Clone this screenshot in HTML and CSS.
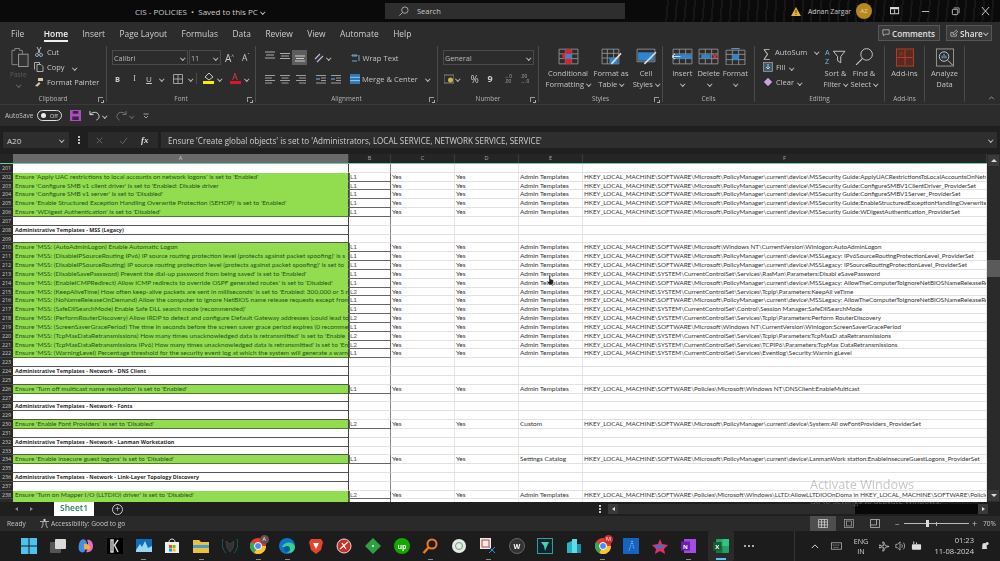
FILE: index.html
```html
<!DOCTYPE html>
<html lang="en">
<head>
<meta charset="utf-8">
<title>CIS - POLICIES</title>
<link rel="stylesheet" href="styles.css">
</head>
<body>
<div class="app">
  <header class="titlebar">
    <div class="doc-title">CIS - POLICIES &nbsp;•&nbsp; Saved to this PC <i class="chev"></i></div>
    <div class="search">
      <svg class="search-ic" viewBox="0 0 12 12"><circle cx="7.5" cy="4.5" r="3.5" fill="none" stroke="#bbb" stroke-width=".9"/><path d="M5 7 1.5 10.5" stroke="#bbb" stroke-width=".9"/></svg>
      <span>Search</span>
    </div>
    <div class="title-right">
      <svg class="warn" viewBox="0 0 12 11"><path d="M6 0 12 11H0Z" fill="#e8b33c"/><path d="M6 3.5v4M6 8.5v1.2" stroke="#3a2a00" stroke-width="1"/></svg>
      <span class="user">Adnan Zargar</span>
      <span class="avatar">AZ</span>
      <svg class="win-ic ic-ribbon" viewBox="0 0 12 10"><rect x=".5" y=".5" width="9" height="7" fill="none" stroke="#ddd"/><rect x=".5" y=".5" width="9" height="2" fill="#ddd"/><path d="M5 3v4" stroke="#ddd"/></svg>
      <svg class="win-ic" viewBox="0 0 12 10"><path d="M2 5h8" stroke="#ccc"/></svg>
      <svg class="win-ic" viewBox="0 0 12 10"><rect x="2.5" y="2.5" width="6" height="6" rx="1" fill="none" stroke="#ccc"/><path d="M4 1h6v6" fill="none" stroke="#ccc" stroke-width=".8"/></svg>
      <svg class="win-ic" viewBox="0 0 12 10"><path d="M2 0 10 9M10 0 2 9" stroke="#ddd"/></svg>
    </div>
  </header>

  <nav class="tabs">
    <span class="tab tab-file">File</span>
    <span class="tab active">Home</span>
    <span class="tab">Insert</span>
    <span class="tab">Page Layout</span>
    <span class="tab">Formulas</span>
    <span class="tab">Data</span>
    <span class="tab">Review</span>
    <span class="tab">View</span>
    <span class="tab">Automate</span>
    <span class="tab">Help</span>
    <div class="tab-actions">
      <button class="pill pill-comments"><svg class="pill-ic" viewBox="0 0 10 10"><path d="M1 1h8v5.500H4L2 8.500V6.500H1Z" fill="none" stroke="#ddd" stroke-width=".8"/></svg>Comments</button>
      <button class="pill pill-share"><svg class="pill-ic" viewBox="0 0 10 10"><path d="M1 4.500h3M1 4.500v4.500h7V6.500M4 5 8 1.500l1.500 2-4 3.500H4Z" fill="none" stroke="#ddd" stroke-width=".8"/></svg>Share <i class="chev"></i></button>
    </div>
  </nav>

  <section class="ribbon">
    <div class="group g-clip">
      <div class="body">
        <div class="paste">
          <svg class="paste-ic" viewBox="0 0 19 20"><path d="M1 2h3V0h5v2h3v4M1 2v15h6" fill="none" stroke="#8a8a8a"/><rect x="8" y="6" width="10" height="13" fill="#333" stroke="#9a9a9a"/></svg>
          <span class="paste-label">Paste</span>
          <i class="chev dim"></i>
        </div>
        <div class="clip-list">
          <div class="clip-item"><svg class="sm" viewBox="0 0 10 10"><path d="M3 0 6 6M7 0 4 6" stroke="#ddd" stroke-width=".8"/><circle cx="3" cy="8" r="1.500" fill="none" stroke="#9cc7f0" stroke-width=".8"/><circle cx="7" cy="8" r="1.500" fill="none" stroke="#9cc7f0" stroke-width=".8"/></svg>Cut</div>
          <div class="clip-item"><svg class="sm" viewBox="0 0 10 10"><path d="M.5 7.500V.5h5V2" fill="none" stroke="#ccc" stroke-width=".8"/><path d="M3 2.500h4l2 2v5H3Z" fill="none" stroke="#ccc" stroke-width=".8"/></svg>Copy <i class="chev gap"></i></div>
          <div class="clip-item"><svg class="sm" viewBox="0 0 10 10"><path d="M4 1h5v3H4ZM1 9l4-4 1.500 1.500-3 3Z" fill="#d8c9a0"/></svg>Format Painter</div>
        </div>
      </div>
      <div class="label">Clipboard</div>
      <i class="launch"></i>
    </div>

    <div class="group g-font">
      <div class="body stack">
        <div class="line">
          <div class="field f-name">Calibri<i class="chev"></i></div>
          <div class="field f-size">11<i class="chev"></i></div>
          <span class="grow-a">A<sup>^</sup></span>
          <span class="grow-b">A<sup>ˇ</sup></span>
        </div>
        <div class="line line2">
          <b class="fmt">B</b><em class="fmt">I</em><u class="fmt">U</u><i class="chev"></i>
          <svg class="sm m-l" viewBox="0 0 10 10"><path d="M.5.5h9v9h-9ZM.5 5h9M5 .5v9" fill="none" stroke="#bbb" stroke-width=".8"/></svg><i class="chev"></i>
          <span class="divider"></span>
          <span class="paint"><svg class="sm" viewBox="0 0 10 8"><path d="M5 0 9 4 5 7 1 4Z" fill="none" stroke="#ddd" stroke-width=".9"/></svg><span class="bar yellow"></span></span><i class="chev"></i>
          <span class="paint m-s"><span class="color-a">A</span><span class="bar red"></span></span><i class="chev"></i>
        </div>
      </div>
      <div class="label">Font</div>
      <i class="launch"></i>
    </div>

    <div class="group g-align">
      <div class="body stack">
        <div class="line">
          <svg class="al" viewBox="0 0 10 10"><path d="M0 1h10M1 4h8M0 7h10" stroke="#bbb" stroke-width=".9"/></svg>
          <svg class="al" viewBox="0 0 10 10"><path d="M0 2.500h10M1 5h8M0 7.500h10" stroke="#bbb" stroke-width=".9"/></svg>
          <span class="al-on"><svg class="al" viewBox="0 0 10 10"><path d="M0 4h10M1 6.500h8M0 9h10" stroke="#ddd" stroke-width=".9"/></svg></span>
          <svg class="sm m-o" viewBox="0 0 10 10"><path d="M1 6 6 1M3 9 9 3" stroke="#c4b9e0" stroke-width="1.200"/></svg><i class="chev"></i>
          <span class="rule"></span>
          <svg class="sm" viewBox="0 0 10 10"><path d="M1 2h5v1H1ZM1 8h5M8 2v6" fill="none" stroke="#7db3e8" stroke-width=".9"/></svg>
          <span class="al-text">Wrap Text</span>
        </div>
        <div class="line line2">
          <svg class="al" viewBox="0 0 10 10"><path d="M0 1.500h10M0 4h7M0 6.500h10M0 9h7" stroke="#bbb" stroke-width=".8"/></svg>
          <svg class="al" viewBox="0 0 10 10"><path d="M0 1.500h10M1.500 4h7M0 6.500h10M1.500 9h7" stroke="#bbb" stroke-width=".8"/></svg>
          <svg class="al" viewBox="0 0 10 10"><path d="M0 1.500h10M3 4h7M0 6.500h10M3 9h7" stroke="#bbb" stroke-width=".8"/></svg>
          <svg class="al m-i" viewBox="0 0 10 10"><path d="M0 1.500h10M5 4h5M5 6.500h5M0 9h10" stroke="#bbb" stroke-width=".8"/><path d="M4 5H0" stroke="#7db3e8"/></svg>
          <svg class="al" viewBox="0 0 10 10"><path d="M0 1.500h10M5 4h5M5 6.500h5M0 9h10" stroke="#bbb" stroke-width=".8"/><path d="M0 5h4" stroke="#7db3e8"/></svg>
          <span class="rule"></span>
          <svg class="sm" viewBox="0 0 10 10"><rect width="10" height="10" fill="#2f78b7"/><path d="M0 3.300h10M0 6.600h10" stroke="#cfe2f5" stroke-width=".7"/></svg>
          <span class="al-text">Merge &amp; Center</span><i class="chev gap2"></i>
        </div>
      </div>
      <div class="label">Alignment</div>
      <i class="launch"></i>
    </div>

    <div class="group g-num">
      <div class="body stack">
        <div class="line"><div class="field f-gen">General<i class="chev"></i></div></div>
        <div class="line line2 num-line">
          <svg class="sm" viewBox="0 0 10 10"><rect y="1" width="10" height="8" fill="none" stroke="#aaa" stroke-width=".7"/><circle cx="6.500" cy="6" r="2.500" fill="#d4b24a"/></svg><i class="chev"></i>
          <span class="pct">%</span><span class="comma">9</span>
          <span class="dec">←0<br>.00</span><span class="dec">.00<br>→.0</span>
        </div>
      </div>
      <div class="label">Number</div>
      <i class="launch"></i>
    </div>

    <div class="group g-styles">
      <div class="body bigs">
        <div class="big w-cf">
          <svg class="lg" viewBox="0 0 20 16"><path d="M1 1h18v14H1ZM1 5.500h18M1 10h18M7 1v14M13 1v14" fill="none" stroke="#999" stroke-width=".8"/><path d="M7 1h6v4.500H7ZM7 10h6v5H7ZM4 5.500h3V10H4Z" fill="#d8222f"/><path d="M7 5.500h6V10H7Z" fill="#3a87c8"/></svg>
          <span>Conditional<br>Formatting <i class="chev"></i></span>
        </div>
        <div class="big w-ft">
          <svg class="lg" viewBox="0 0 20 16"><path d="M1 1h16v14H1ZM1 5h16M1 9.500h16M6 1v14M12 1v14" fill="none" stroke="#999" stroke-width=".8"/><path d="M8 9h8v6H8Z" fill="#2f86d0"/><path d="M10 15 19 5" stroke="#ddd" stroke-width="1.500"/></svg>
          <span>Format as<br>Table <i class="chev"></i></span>
        </div>
        <div class="big w-cs">
          <svg class="lg" viewBox="0 0 20 16"><path d="M1 1h17v12H1Z" fill="none" stroke="#999" stroke-width=".8"/><path d="M2 4h15v8H2Z" fill="#2f86d0"/><path d="M8 15 19 4" stroke="#ddd" stroke-width="1.500"/></svg>
          <span>Cell<br>Styles <i class="chev"></i></span>
        </div>
      </div>
      <div class="label">Styles</div>
      <i class="launch"></i>
    </div>

    <div class="group g-cells">
      <div class="body bigs">
        <div class="big w-cell">
          <svg class="lg" viewBox="0 0 20 16"><path d="M1 1h18v14H1ZM1 5.500h18M1 10h18M7 1v14M13 1v14" fill="none" stroke="#999" stroke-width=".8"/><path d="M3 6h16v4H3Z" fill="#2f86d0"/><path d="M8 8H0M3 5.500 0 8l3 2.500" fill="none" stroke="#bfe0ff"/></svg>
          <span>Insert<br><i class="chev"></i></span>
        </div>
        <div class="big w-cell">
          <svg class="lg" viewBox="0 0 20 16"><path d="M1 1h18v14H1ZM1 5.500h18M1 10h18M7 1v14M13 1v14" fill="none" stroke="#999" stroke-width=".8"/><path d="M3 6h9v4H3Z" fill="#2f86d0"/><path d="m13 5 6 6M19 5l-6 6" stroke="#e0405a"/></svg>
          <span>Delete<br><i class="chev"></i></span>
        </div>
        <div class="big w-cell">
          <svg class="lg" viewBox="0 0 20 16"><path d="M1 2h18v14H1ZM1 6h18M1 11h18M7 2v14M13 2v14" fill="none" stroke="#999" stroke-width=".8"/><path d="M7 6h6v5H7Z" fill="#2f86d0"/><path d="M6 .5h8" stroke="#5aa0dc"/></svg>
          <span>Format<br><i class="chev"></i></span>
        </div>
      </div>
      <div class="label">Cells</div>
    </div>

    <div class="group g-edit">
      <div class="body edit-body">
        <div class="clip-list edit-list">
          <div class="clip-item"><span class="sigma">∑</span>AutoSum <i class="chev gap"></i></div>
          <div class="clip-item"><svg class="sm" viewBox="0 0 10 10"><rect x=".5" y=".5" width="9" height="9" fill="#3c5a72" stroke="#aaa" stroke-width=".7"/><path d="M5 2v5M3 5l2 2 2-2" fill="none" stroke="#ddd" stroke-width=".8"/></svg>Fill <i class="chev"></i></div>
          <div class="clip-item"><svg class="sm" viewBox="0 0 10 10"><path d="M5 1 9 5 5 9 1 5Z" fill="#c9a3dc" stroke="#c47ed8" stroke-width=".6"/></svg>Clear <i class="chev"></i></div>
        </div>
        <div class="big w-sort">
          <svg class="lg" viewBox="0 0 20 16"><text x="0" y="7" class="az">A</text><text x="0" y="15" class="az">Z</text><path d="M8 3h11l-4 5v6l-3-2V8Z" fill="none" stroke="#ccc" stroke-width=".9"/></svg>
          <span>Sort &amp;<br>Filter <i class="chev"></i></span>
        </div>
        <div class="big w-find">
          <svg class="lg" viewBox="0 0 20 16"><circle cx="12" cy="6" r="5.500" fill="none" stroke="#ccc" stroke-width=".9"/><path d="M8 10 2 16" stroke="#ccc"/></svg>
          <span>Find &amp;<br>Select <i class="chev"></i></span>
        </div>
      </div>
      <div class="label">Editing</div>
    </div>

    <div class="group g-addin">
      <div class="body bigs">
        <div class="big w-addin">
          <svg class="lg" viewBox="0 0 20 20"><rect x="1" y="1" width="18" height="18" fill="#5a2a20" stroke="#b5402a"/><path d="M2 10h16M10 2v16" stroke="#b5402a"/><rect x="4" y="4" width="4" height="4" fill="#7a3020"/></svg>
          <span>Add-ins</span>
        </div>
      </div>
      <div class="label">Add-ins</div>
    </div>

    <div class="group g-analyze">
      <div class="body bigs">
        <div class="big w-addin">
          <svg class="lg" viewBox="0 0 20 20"><rect x="1" y="1" width="18" height="18" fill="none" stroke="#999"/><circle cx="9" cy="9" r="5" fill="none" stroke="#ccc"/><path d="M7 11V8M9 11V6M11 11V8" stroke="#7db3e8"/><path d="m13 13 5 5" stroke="#ccc"/></svg>
          <span>Analyze<br>Data</span>
        </div>
      </div>
    </div>
    <svg class="collapse" viewBox="0 0 8 5"><path d="M1 4 4 1l3 3" fill="none" stroke="#aaa"/></svg>
  </section>

  <div class="qat">
    <span class="qat-auto">AutoSave</span>
    <span class="toggle"><i class="dot"></i>Off</span>
    <svg class="qat-ic" viewBox="0 0 12 12"><path d="M0 0h12v12H0Z" fill="#b04ac0"/><path d="M3 1h6v3H3ZM2.500 7h7v4h-7Z" fill="#3a2340"/></svg>
    <svg class="qat-ic" viewBox="0 0 12 12"><path d="M1 1v4h4M1 5c3-4 10-3 10 2 0 2-1 3-3 4" fill="none" stroke="#ddd"/></svg><i class="chev"></i>
    <svg class="qat-ic q-dim" viewBox="0 0 12 12"><path d="M11 1v4H7M11 5C8 1 1 2 1 7c0 2 1 3 3 4" fill="none" stroke="#777"/></svg><i class="chev dim"></i>
    <svg class="qat-more" viewBox="0 0 6 6"><path d="M.5 1h5M1 3l2 2 2-2" fill="none" stroke="#bbb" stroke-width=".8"/></svg>
  </div>

  <div class="formula">
    <div class="namebox">A20<i class="chev"></i></div>
    <span class="vdots"></span>
    <div class="fx-btns">
      <svg class="fx-ic" viewBox="0 0 10 10"><path d="m2 2 6 6M8 2 2 8" stroke="#666" stroke-width="1.100"/></svg>
      <svg class="fx-ic" viewBox="0 0 10 10"><path d="M1 5.500 4 8.500 9 2" fill="none" stroke="#666" stroke-width="1.100"/></svg>
      <span class="fx">fx</span>
    </div>
    <div class="fbar">Ensure 'Create global objects' is set to 'Administrators, LOCAL SERVICE, NETWORK SERVICE, SERVICE'<i class="chev"></i></div>
  </div>

  <main class="sheet">
    <div class="grid">
      <div class="row head">
        <div class="corner"></div><div class="ch sel">A</div><div class="ch">B</div><div class="ch">C</div><div class="ch">D</div><div class="ch">E</div><div class="ch">F</div>
      </div>
      <div class="rows">
        <div class="row"><div class="rh">201</div><div class="cell a"></div><div class="cell b"></div><div class="cell"></div><div class="cell"></div><div class="cell"></div><div class="cell"></div></div>

        <div class="row"><div class="rh">202</div><div class="cell a green">Ensure 'Apply UAC restrictions to local accounts on network logons' is set to 'Enabled'</div><div class="cell b box">L1</div><div class="cell">Yes</div><div class="cell">Yes</div><div class="cell">Admin Templates</div><div class="cell">HKEY_LOCAL_MACHINE\SOFTWARE\Microsoft\PolicyManager\current\device\MSSecurity Guide:ApplyUACRestrictionsToLocalAccountsOnNetw</div></div>
        <div class="row"><div class="rh">203</div><div class="cell a green">Ensure 'Configure SMB v1 client driver' is set to 'Enabled: Disable driver</div><div class="cell b box">L1</div><div class="cell">Yes</div><div class="cell">Yes</div><div class="cell">Admin Templates</div><div class="cell">HKEY_LOCAL_MACHINE\SOFTWARE\Microsoft\PolicyManager\current\device\MSSecurity Guide:ConfigureSMBV1ClientDriver_ProviderSet</div></div>
        <div class="row"><div class="rh">204</div><div class="cell a green">Ensure 'Configure SMB v1 server' is set to 'Disabled'</div><div class="cell b box">L1</div><div class="cell">Yes</div><div class="cell">Yes</div><div class="cell">Admin Templates</div><div class="cell">HKEY_LOCAL_MACHINE\SOFTWARE\Microsoft\PolicyManager\current\device\MSSecurity Guide:ConfigureSMBV1Server_ProviderSet</div></div>
        <div class="row"><div class="rh">205</div><div class="cell a green">Ensure 'Enable Structured Exception Handling Overwrite Protection (SEHOP)' is set to 'Enabled'</div><div class="cell b box">L1</div><div class="cell">Yes</div><div class="cell">Yes</div><div class="cell">Admin Templates</div><div class="cell">HKEY_LOCAL_MACHINE\SOFTWARE\Microsoft\PolicyManager\current\device\MSSecurity Guide:EnableStructuredExceptionHandlingOverwrite</div></div>
        <div class="row"><div class="rh">206</div><div class="cell a green end">Ensure 'WDigest Authentication' is set to 'Disabled'</div><div class="cell b box">L1</div><div class="cell">Yes</div><div class="cell">Yes</div><div class="cell">Admin Templates</div><div class="cell">HKEY_LOCAL_MACHINE\SOFTWARE\Microsoft\PolicyManager\current\device\MSSecurity Guide:WDigestAuthentication_ProviderSet</div></div>

        <div class="row"><div class="rh">207</div><div class="cell a plain"></div><div class="cell b"></div><div class="cell"></div><div class="cell"></div><div class="cell"></div><div class="cell"></div></div>
        <div class="row"><div class="rh">208</div><div class="cell a plain title">Administrative Templates - MSS (Legacy)</div><div class="cell b"></div><div class="cell"></div><div class="cell"></div><div class="cell"></div><div class="cell"></div></div>
        <div class="row"><div class="rh">209</div><div class="cell a plain"></div><div class="cell b"></div><div class="cell"></div><div class="cell"></div><div class="cell"></div><div class="cell"></div></div>

        <div class="row"><div class="rh">210</div><div class="cell a green">Ensure 'MSS: (AutoAdminLogon) Enable Automatic Logon</div><div class="cell b box">L1</div><div class="cell">Yes</div><div class="cell">Yes</div><div class="cell">Admin Templates</div><div class="cell">HKEY_LOCAL_MACHINE\SOFTWARE\Microsoft\Windows NT\CurrentVersion\Winlogon:AutoAdminLogon</div></div>
        <div class="row"><div class="rh">211</div><div class="cell a green">Ensure 'MSS: (DisableIPSourceRouting IPv6) IP source routing protection level (protects against packet spoofing)' is s</div><div class="cell b box">L1</div><div class="cell">Yes</div><div class="cell">Yes</div><div class="cell">Admin Templates</div><div class="cell">HKEY_LOCAL_MACHINE\SOFTWARE\Microsoft\PolicyManager\current\device\MSSLegacy: IPv6SourceRoutingProtectionLevel_ProviderSet</div></div>
        <div class="row"><div class="rh">212</div><div class="cell a green">Ensure 'MSS: (DisableIPSourceRouting) IP source routing protection level (protects against packet spoofing)' is set to</div><div class="cell b box">L1</div><div class="cell">Yes</div><div class="cell">Yes</div><div class="cell">Admin Templates</div><div class="cell">HKEY_LOCAL_MACHINE\SOFTWARE\Microsoft\PolicyManager\current\device\MSSLegacy: IPSourceRoutingProtectionLevel_ProviderSet</div></div>
        <div class="row"><div class="rh">213</div><div class="cell a green">Ensure 'MSS: (DisableSavePassword) Prevent the dial-up password from being saved' is set to 'Enabled'</div><div class="cell b box">L1</div><div class="cell">Yes</div><div class="cell">Yes</div><div class="cell">Admin Templates</div><div class="cell">HKEY_LOCAL_MACHINE\SYSTEM\CurrentControlSet\Services\RasMan\Parameters:Disabl eSavePassword</div></div>
        <div class="row"><div class="rh">214</div><div class="cell a green">Ensure 'MSS: (EnableICMPRedirect) Allow ICMP redirects to override OSPF generated routes' is set to 'Disabled'</div><div class="cell b box">L1</div><div class="cell">Yes</div><div class="cell">Yes</div><div class="cell">Admin Templates</div><div class="cell">HKEY_LOCAL_MACHINE\SOFTWARE\Microsoft\PolicyManager\current\device\MSSLegacy: AllowTheComputerToIgnoreNetBIOSNameReleaseRe</div></div>
        <div class="row"><div class="rh">215</div><div class="cell a green">Ensure 'MSS: (KeepAliveTime) How often keep-alive packets are sent in milliseconds' is set to 'Enabled: 300,000 or 5 m</div><div class="cell b box">L2</div><div class="cell">Yes</div><div class="cell">Yes</div><div class="cell">Admin Templates</div><div class="cell">HKEY_LOCAL_MACHINE\SYSTEM\CurrentControlSet\Services\Tcpip\Parameters:KeepAli veTime</div></div>
        <div class="row"><div class="rh">216</div><div class="cell a green">Ensure 'MSS: (NoNameReleaseOnDemand) Allow the computer to ignore NetBIOS name release requests except from W</div><div class="cell b box">L1</div><div class="cell">Yes</div><div class="cell">Yes</div><div class="cell">Admin Templates</div><div class="cell">HKEY_LOCAL_MACHINE\SOFTWARE\Microsoft\PolicyManager\current\device\MSSLegacy: AllowTheComputerToIgnoreNetBIOSNameReleaseRe</div></div>
        <div class="row"><div class="rh">217</div><div class="cell a green">Ensure 'MSS: (SafeDllSearchMode) Enable Safe DLL search mode (recommended)'</div><div class="cell b box">L1</div><div class="cell">Yes</div><div class="cell">Yes</div><div class="cell">Admin Templates</div><div class="cell">HKEY_LOCAL_MACHINE\SYSTEM\CurrentControlSet\Control\Session Manager:SafeDllSearchMode</div></div>
        <div class="row"><div class="rh">218</div><div class="cell a green">Ensure 'MSS: (PerformRouterDiscovery) Allow IRDP to detect and configure Default Gateway addresses (could lead to</div><div class="cell b box">L2</div><div class="cell">Yes</div><div class="cell">Yes</div><div class="cell">Admin Templates</div><div class="cell">HKEY_LOCAL_MACHINE\SYSTEM\CurrentControlSet\Services\Tcpip\Parameters:Perform RouterDiscovery</div></div>
        <div class="row"><div class="rh">219</div><div class="cell a green">Ensure 'MSS: (ScreenSaverGracePeriod) The time in seconds before the screen saver grace period expires (0 recommen</div><div class="cell b box">L1</div><div class="cell">Yes</div><div class="cell">Yes</div><div class="cell">Admin Templates</div><div class="cell">HKEY_LOCAL_MACHINE\SOFTWARE\Microsoft\Windows NT\CurrentVersion\Winlogon:ScreenSaverGracePeriod</div></div>
        <div class="row"><div class="rh">220</div><div class="cell a green">Ensure 'MSS: (TcpMaxDataRetransmissions) How many times unacknowledged data is retransmitted' is set to 'Enable</div><div class="cell b box">L2</div><div class="cell">Yes</div><div class="cell">Yes</div><div class="cell">Admin Templates</div><div class="cell">HKEY_LOCAL_MACHINE\SYSTEM\CurrentControlSet\Services\Tcpip\Parameters:TcpMaxD ataRetransmissions</div></div>
        <div class="row"><div class="rh">221</div><div class="cell a green">Ensure 'MSS: (TcpMaxDataRetransmissions IPv6) How many times unacknowledged data is retransmitted' is set to 'En</div><div class="cell b box">L2</div><div class="cell">Yes</div><div class="cell">Yes</div><div class="cell">Admin Templates</div><div class="cell">HKEY_LOCAL_MACHINE\SYSTEM\CurrentControlSet\Services\TCPIP6\Parameters:TcpMax DataRetransmissions</div></div>
        <div class="row"><div class="rh">222</div><div class="cell a green end">Ensure 'MSS: (WarningLevel) Percentage threshold for the security event log at which the system will generate a warni</div><div class="cell b box">L1</div><div class="cell">Yes</div><div class="cell">Yes</div><div class="cell">Admin Templates</div><div class="cell">HKEY_LOCAL_MACHINE\SYSTEM\CurrentControlSet\Services\Eventlog\Security:Warnin gLevel</div></div>

        <div class="row"><div class="rh">223</div><div class="cell a plain"></div><div class="cell b"></div><div class="cell"></div><div class="cell"></div><div class="cell"></div><div class="cell"></div></div>
        <div class="row"><div class="rh">224</div><div class="cell a title">Administrative Templates - Network - DNS Client</div><div class="cell b"></div><div class="cell"></div><div class="cell"></div><div class="cell"></div><div class="cell"></div></div>
        <div class="row"><div class="rh">225</div><div class="cell a plain"></div><div class="cell b"></div><div class="cell"></div><div class="cell"></div><div class="cell"></div><div class="cell"></div></div>
        <div class="row"><div class="rh">226</div><div class="cell a green end">Ensure 'Turn off multicast name resolution' is set to 'Enabled'</div><div class="cell b box">L1</div><div class="cell">Yes</div><div class="cell">Yes</div><div class="cell">Admin Templates</div><div class="cell">HKEY_LOCAL_MACHINE\SOFTWARE\Policies\Microsoft\Windows NT\DNSClient:EnableMulticast</div></div>
        <div class="row"><div class="rh">227</div><div class="cell a plain"></div><div class="cell b"></div><div class="cell"></div><div class="cell"></div><div class="cell"></div><div class="cell"></div></div>
        <div class="row"><div class="rh">228</div><div class="cell a title">Administrative Templates - Network - Fonts</div><div class="cell b"></div><div class="cell"></div><div class="cell"></div><div class="cell"></div><div class="cell"></div></div>
        <div class="row"><div class="rh">229</div><div class="cell a plain"></div><div class="cell b"></div><div class="cell"></div><div class="cell"></div><div class="cell"></div><div class="cell"></div></div>
        <div class="row"><div class="rh">230</div><div class="cell a green end">Ensure 'Enable Font Providers' is set to 'Disabled'</div><div class="cell b box">L2</div><div class="cell">Yes</div><div class="cell">Yes</div><div class="cell">Custom</div><div class="cell">HKEY_LOCAL_MACHINE\SOFTWARE\Microsoft\PolicyManager\current\device\System:All owFontProviders_ProviderSet</div></div>
        <div class="row"><div class="rh">231</div><div class="cell a plain"></div><div class="cell b"></div><div class="cell"></div><div class="cell"></div><div class="cell"></div><div class="cell"></div></div>
        <div class="row"><div class="rh">232</div><div class="cell a title">Administrative Templates - Network - Lanman Workstation</div><div class="cell b"></div><div class="cell"></div><div class="cell"></div><div class="cell"></div><div class="cell"></div></div>
        <div class="row"><div class="rh">233</div><div class="cell a plain"></div><div class="cell b"></div><div class="cell"></div><div class="cell"></div><div class="cell"></div><div class="cell"></div></div>
        <div class="row"><div class="rh">234</div><div class="cell a green end">Ensure 'Enable insecure guest logons' is set to 'Disabled'</div><div class="cell b box">L1</div><div class="cell">Yes</div><div class="cell">Yes</div><div class="cell">Settings Catalog</div><div class="cell">HKEY_LOCAL_MACHINE\SOFTWARE\Microsoft\PolicyManager\current\device\LanmanWork station:EnableInsecureGuestLogons_ProviderSet</div></div>
        <div class="row"><div class="rh">235</div><div class="cell a plain"></div><div class="cell b"></div><div class="cell"></div><div class="cell"></div><div class="cell"></div><div class="cell"></div></div>
        <div class="row"><div class="rh">236</div><div class="cell a title">Administrative Templates - Network - Link-Layer Topology Discovery</div><div class="cell b"></div><div class="cell"></div><div class="cell"></div><div class="cell"></div><div class="cell"></div></div>
        <div class="row"><div class="rh">237</div><div class="cell a"></div><div class="cell b"></div><div class="cell"></div><div class="cell"></div><div class="cell"></div><div class="cell"></div></div>
        <div class="row"><div class="rh">238</div><div class="cell a green">Ensure 'Turn on Mapper I/O (LLTDIO) driver' is set to 'Disabled'</div><div class="cell b box">L2</div><div class="cell">Yes</div><div class="cell">Yes</div><div class="cell">Admin Templates</div><div class="cell">HKEY_LOCAL_MACHINE\SOFTWARE\Policies\Microsoft\Windows\LLTD:AllowLLTDIOOnDoma in HKEY_LOCAL_MACHINE\SOFTWARE\Policies\Mi</div></div>
        <div class="row"><div class="rh"></div><div class="cell a green"></div><div class="cell b box"></div><div class="cell"></div><div class="cell"></div><div class="cell"></div><div class="cell"></div></div>
      </div>
    </div>
    <div class="vscroll">
      <span class="vbtn"><i class="tri up"></i></span>
      <span class="vtrack"><span class="vthumb"></span></span>
      <span class="vbtn vbtn-low"><i class="tri down"></i></span>
    </div>
    <svg class="cursor" viewBox="0 0 8 10"><path d="M3 0h1.500v4l3 1v3L6 10H3L.5 6 3 6.500Z" fill="#222" stroke="#fff" stroke-width=".5"/></svg>
    <div class="activate"><div class="act-1">Activate Windows</div><div class="act-2">Go to Settings to activate Windows.</div></div>
  </main>

  <div class="sheetbar">
    <i class="nav-tri left"></i><i class="nav-tri right"></i>
    <span class="sheet-tab">Sheet1</span>
    <span class="add-sheet">+</span>
    <span class="hdots"></span>
    <span class="hbtn hbtn-first"><i class="nav-tri left lit"></i></span>
    <span class="hthumb"></span>
    <span class="htrack"></span>
    <span class="hbtn"><i class="nav-tri right lit"></i></span>
  </div>

  <footer class="status">
    <span class="ready">Ready</span>
    <svg class="acc" viewBox="0 0 11 11"><circle cx="5.500" cy="2" r="1.200" fill="#ccc"/><path d="M1 3.500h9M4 4v3L2.500 10M7 4v3l1.500 3" fill="none" stroke="#ccc" stroke-width=".8"/></svg>
    <span class="acc-text">Accessibility: Good to go</span>
    <span class="view view-on"><svg class="view-ic" viewBox="0 0 10 9"><path d="M.5.5h9v8h-9ZM.5 3h9M.5 5.800h9M3.500.5v8M6.500.5v8" fill="none" stroke="#ddd" stroke-width=".7"/></svg></span>
    <span class="view"><svg class="view-ic" viewBox="0 0 10 9"><rect x=".5" y=".5" width="9" height="8" fill="none" stroke="#aaa" stroke-width=".7"/><rect x="2.500" y="2" width="5" height="5" fill="none" stroke="#aaa" stroke-width=".7"/></svg></span>
    <span class="view"><svg class="view-ic" viewBox="0 0 10 9"><path d="M.5.5h9v8h-9ZM.5 6h6M6.500.5V6" fill="none" stroke="#bbb" stroke-width=".8"/></svg></span>
    <span class="zoom-minus">−</span>
    <span class="slider"><i class="knob"></i><i class="tick"></i></span>
    <span class="zoom-plus">+</span>
    <span class="zoom-val">70%</span>
  </footer>

  <div class="taskbar">
    <div class="apps">
      <span class="app-ic"><svg viewBox="0 0 16 16"><path d="M0 0h7.500v7.500H0ZM8.500 0H16v7.500H8.500ZM0 8.500h7.500V16H0ZM8.500 8.500H16V16H8.500Z" fill="#4cc2f1"/></svg></span>
      <span class="app-ic"><svg viewBox="0 0 16 16"><rect y="4" width="11" height="11" rx="1" fill="#555"/><rect x="5" y="1" width="11" height="10" rx="1" fill="#d9d9d9"/></svg></span>
      <span class="app-ic"><svg viewBox="0 0 16 16"><path d="M3 2c3-2 5 0 6 3L7 13c-1 2-5 2-6-1S1 4 3 2Z" fill="#3f8fe8"/><path d="M9 2c3-1 6 2 6 6s-3 7-7 6c2-2 3-9 1-12Z" fill="#e86fc0"/><path d="M6 6c2-1 5 0 6 3s-3 3-6 2Z" fill="#f0b040"/></svg></span>
      <span class="app-ic"><svg viewBox="0 0 16 16"><rect width="16" height="16" fill="#000"/><path d="M4 2h2v12H4ZM11 2 7.500 7 11 14" fill="none" stroke="#ddd" stroke-width="1.400"/></svg></span>
      <span class="app-ic dash"><svg viewBox="0 0 16 16"><rect y="1" width="16" height="13" fill="#0f6cb5"/><path d="M0 12 4 6l2 3 3-6 3 7 4-2v6H0Z" fill="#9ad7f7"/></svg></span>
      <span class="app-ic"><svg viewBox="0 0 16 16"><path d="M1 4h14v11H1Z" fill="#eee"/><path d="M5 4c0-4 6-4 6 0" fill="none" stroke="#ddd"/><path d="M5 7h3v3H5Z" fill="#f25022"/><path d="M8.500 7h3v3h-3Z" fill="#7fba00"/><path d="M5 10.500h3v3H5Z" fill="#00a4ef"/><path d="M8.500 10.500h3v3h-3Z" fill="#ffb900"/></svg></span>
      <span class="app-ic dash"><svg viewBox="0 0 16 16"><path d="M0 2h6l2 2h8v11H0Z" fill="#f2c037"/><path d="M0 7h16v3H0Z" fill="#3aa0dc"/></svg></span>
      <span class="app-ic"><svg viewBox="0 0 16 16"><path d="M1 1c-2 6 0 11 3 14M15 1c2 6 0 11-3 14" fill="none" stroke="#17606b"/><path d="M4 3l4 3 4-3-1 7-3 4-3-4Z" fill="#333" stroke="#555" stroke-width=".5"/></svg></span>
      <span class="app-ic dash badge-wrap"><svg viewBox="0 0 16 16"><circle cx="8" cy="8" r="8" fill="#e33b2e"/><path d="M8 8 16 8A8 8 0 0 1 4 15Z" fill="#f7c52c"/><path d="M8 8 4 15A8 8 0 0 1 1 4Z" fill="#3aa757"/><circle cx="8" cy="8" r="3.500" fill="#4c8bf5" stroke="#fff"/></svg><i class="badge gray">A</i></span>
      <span class="app-ic dash"><svg viewBox="0 0 16 16"><circle cx="8" cy="8" r="8" fill="#0f74c8"/><path d="M16 9c0 5-6 8-9 4s3-7 5-4H3c2-6 12-6 13 0Z" fill="#3ecf8e"/><circle cx="8" cy="11" r="3" fill="#0a5aa0"/></svg></span>
      <span class="app-ic"><svg viewBox="0 0 16 16"><path d="M3 1h10l2 3-2 8-5 4-5-4-2-8Z" fill="#e2452a"/><path d="M5 5h6L8 11Z" fill="#fff"/></svg></span>
      <span class="app-ic"><svg viewBox="0 0 16 16"><circle cx="8" cy="8" r="7" fill="#c9302c" stroke="#ddd"/><path d="M4 11 12 4M6 5l4 6" stroke="#fff" stroke-width="1.200"/></svg></span>
      <span class="app-ic"><svg viewBox="0 0 16 16"><path d="M8 0 16 8 8 16 0 8Z" fill="#2ea043"/><circle cx="8" cy="8" r="1" fill="#cfe"/></svg></span>
      <span class="app-ic"><svg viewBox="0 0 16 16"><circle cx="8" cy="8" r="8" fill="#14a800"/><text x="8" y="10.500" class="up">up</text></svg></span>
      <span class="app-ic dash"><svg viewBox="0 0 16 16"><circle cx="10" cy="6" r="4.500" fill="none" stroke="#f07c1c" stroke-width="2"/><path d="M7 9 1.500 15" stroke="#f07c1c" stroke-width="2.500"/></svg></span>
      <span class="app-ic"><svg viewBox="0 0 16 16"><circle cx="8" cy="8" r="7" fill="#e8e8e8"/><circle cx="8" cy="8" r="3.500" fill="none" stroke="#58a86c"/></svg></span>
      <span class="app-ic dash"><svg viewBox="0 0 16 16"><rect width="11" height="11" fill="#eee"/><rect x="2" y="2" width="7" height="7" fill="none" stroke="#d03a3a"/><path d="m9 9 6 6M15 9l-6 6" stroke="#2c9ad6"/></svg></span>
      <span class="app-ic"><svg viewBox="0 0 16 16"><circle cx="8" cy="8" r="7.500" fill="#333" stroke="#666"/><text x="8" y="11" class="w">W</text></svg></span>
      <span class="app-ic"><svg viewBox="0 0 16 16"><rect x=".5" y=".5" width="15" height="15" fill="#123" stroke="#2ca58d"/><path d="M4 4h8l-2 4-2 5-1-5Z" fill="#3dd6a8"/></svg></span>
      <span class="app-ic"><svg viewBox="0 0 16 16"><path d="M1 5l5-2v12H1Z" fill="#28b3c7"/><path d="M6 1h5v14H6Z" fill="#5fdce6"/><path d="M11 6h4v9h-4Z" fill="#1b90a8"/></svg></span>
      <span class="app-ic dash badge-wrap"><svg viewBox="0 0 16 16"><circle cx="8" cy="8" r="8" fill="#e33b2e"/><path d="M8 8 16 8A8 8 0 0 1 4 15Z" fill="#f7c52c"/><path d="M8 8 4 15A8 8 0 0 1 1 4Z" fill="#3aa757"/><circle cx="8" cy="8" r="3.500" fill="#4c8bf5" stroke="#fff"/></svg><i class="badge red">M</i></span>
      <span class="app-ic"><svg viewBox="0 0 16 16"><rect width="16" height="16" fill="#1565c0"/><path d="M9 3 6 13M9 3l2 8" stroke="#9ccaf5" stroke-dasharray="1 1"/></svg></span>
      <span class="app-ic"><svg viewBox="0 0 16 16"><path d="M8 1l2 5 6 1-4 4 1 5-5-3-5 3 1-5-4-4 6-1Z" fill="#e0325c"/><path d="M3 7h10l-3 3-5 1Z" fill="#3f6fd8"/></svg></span>
      <span class="app-ic dash"><svg viewBox="0 0 16 16"><rect x="3" y="1" width="12" height="14" fill="#a44ee0"/><rect y="3.500" width="9" height="9" fill="#6a1fb0"/><text x="4.500" y="10.700" class="o">N</text></svg></span>
      <span class="app-ic excel"><svg viewBox="0 0 16 16"><rect x="3" y="1" width="13" height="14" rx="1" fill="#21a366"/><path d="M9.500 1H16v7H9.500Z" fill="#33c481"/><path d="M3 8h6.500v7H3Z" fill="#107c41"/><rect y="4" width="8.500" height="8.500" fill="#185c37"/><text x="4.200" y="10.700" class="o">X</text></svg></span>
      <span class="app-ic more"><i></i><i></i><i></i></span>
    </div>
    <div class="tray">
      <svg class="tray-ic chevron-up" viewBox="0 0 10 6"><path d="M1 5 5 1l4 4" fill="none" stroke="#ddd" stroke-width="1.200"/></svg>
      <svg class="tray-ic kb" viewBox="0 0 12 8"><rect x=".5" y=".5" width="11" height="7" fill="none" stroke="#bbb" stroke-width=".8"/><path d="M2 3h8M3 5.500h6" stroke="#bbb" stroke-dasharray="1 1"/></svg>
      <div class="lang">ENG<br>IN</div>
      <svg class="tray-ic t-net" viewBox="0 0 12 12"><path d="M11 6 7 5 5 1H4l1 4-3 .5L1 4 0 6l1 2 1-1.500L5 7l-1 4h1l2-4Z" fill="none" stroke="#ddd" stroke-width=".8"/></svg>
      <svg class="tray-ic t-vol" viewBox="0 0 12 12"><path d="M1 4h2l3-3v10L3 8H1Z" fill="none" stroke="#ddd" stroke-width=".8"/><path d="M8 4c1 1 1 3 0 4M10 2c2 2 2 6 0 8" fill="none" stroke="#ddd" stroke-width=".8"/></svg>
      <svg class="tray-ic t-bat" viewBox="0 0 12 10"><rect x="1" y="3" width="10" height="6" rx="1" fill="#ddd"/><path d="M3 3V0M6 3V1" stroke="#ddd"/></svg>
      <div class="clock">01:23<br>11-08-2024</div>
      <svg class="tray-ic t-bell" viewBox="0 0 12 12"><path d="M3 9V5a3 3 0 0 1 6 0v4l1 1H2Z" fill="#ddd"/><circle cx="9.500" cy="2.500" r="2" fill="#ddd"/></svg>
    </div>
  </div>
</div>
</body>
</html>
```

FILE: styles.css
```css
* { box-sizing: border-box; }
html, body { margin: 0; padding: 0; height: 100%; background: #1c1c1c; overflow: hidden; }
.app {
  width: 1000px; height: 561px; display: flex; flex-direction: column;
  font-family: "Open Sans", "Noto Sans", sans-serif; color: #d8d8d8; filter: blur(.35px);
}
svg { display: block; flex: none; }
i { font-style: normal; }
.chev {
  display: inline-block; width: 3.500px; height: 3.500px; flex: none;
  border-right: 1px solid #bbb; border-bottom: 1px solid #bbb;
  transform: rotate(45deg); vertical-align: 1.500px; margin-left: 1px;
}
.chev.dim { border-color: #666; }
.chev.gap { margin-left: 6px; }
.chev.gap2 { margin-left: 8px; }

/* title bar */
.titlebar {
  height: 22px; background-color: #0a0a0a; display: flex; align-items: center; padding-left: 135px; flex: none;
  background-image: repeating-linear-gradient(95deg, transparent 0 7px, #161616 7px 9px);
  background-size: 340px 22px; background-position: right top; background-repeat: no-repeat;
}
.doc-title { width: 250px; font-size: 8px; color: #ccc; }
.search { width: 240px; height: 16px; background: #2e2e2e; display: flex; align-items: center; padding-left: 13px; font-size: 7.500px; color: #c8c8c8; }
.search-ic { width: 11px; height: 11px; margin-right: 8px; }
.title-right { margin-left: auto; display: flex; align-items: center; }
.warn { width: 10px; height: 9px; margin-right: 7px; }
.user { font-size: 6.800px; color: #ccc; width: 48px; }
.avatar { width: 16px; height: 16px; border-radius: 50%; background: #b5891f; color: #e8d9a8; font-size: 6px; display: flex; align-items: center; justify-content: center; margin-right: 18px; }
.win-ic { width: 11px; height: 9px; margin-right: 19px; }
.win-ic:last-child { margin-right: 9px; }

/* tabs */
.tabs { height: 22px; background: #2c2c2c; display: flex; align-items: center; padding-left: 11px; gap: 14.500px; font-size: 8.400px; flex: none; }
.tab { color: #cfcfcf; position: relative; }
.tab-file { margin-right: 5px; }
.tab.active { color: #f4f4f4; font-weight: 600; }
.tab.active::after { content: ""; position: absolute; left: 0; right: 0; bottom: -3px; height: 2px; background: #eee; }
.tab-actions { margin-left: auto; display: flex; gap: 6px; padding-right: 8px; }
.pill { height: 16px; background: #3a3a3a; border: 1px solid #565656; color: #e0e0e0; font: 600 8.200px "Open Sans", sans-serif; display: flex; align-items: center; padding: 0 3px; }
.pill-comments { width: 62px; }
.pill-share { width: 46px; }
.pill-ic { width: 8px; height: 8px; margin-right: 2px; }

/* ribbon */
.ribbon { height: 61px; background: #2c2c2c; display: flex; padding-top: 2px; border-bottom: 1px solid #3a3a3a; flex: none; position: relative; }
.group { display: flex; flex-direction: column; border-right: 1px solid #4a4a4a; position: relative; margin-bottom: 2px; flex: none; }
.body { flex: 1; display: flex; min-height: 0; }
.label { height: 12px; text-align: center; font-size: 6.400px; color: #b4b4b4; line-height: 12px; padding-top: 3px; }
.launch { position: absolute; right: 3px; bottom: 0; width: 5px; height: 5px; border: 1px solid #999; border-width: 1px 0 0 1px; }
.launch::after { content: ""; position: absolute; right: -1px; bottom: -1px; width: 2px; height: 2px; border: 1px solid #aaa; border-width: 0 1px 1px 0; }
.g-clip { width: 107px; }
.g-font { width: 149px; }
.g-align { width: 182px; }
.g-num { width: 101px; }
.g-styles { width: 124px; }
.g-cells { width: 92px; }
.g-edit { width: 130px; }
.g-addin { width: 40px; }
.g-analyze { width: 40px; }
.paste { width: 34px; padding: 2px 0 0 11px; display: flex; flex-direction: column; }
.paste-ic { width: 18px; height: 20px; }
.paste-label { font-size: 6.500px; color: #5c5c5c; margin: 2px 0 0 -1px; }
.paste .chev { margin: 4px 0 0 6px; }
.clip-list { display: flex; flex-direction: column; margin-top: -1.500px; }
.clip-item { height: 15.500px; display: flex; align-items: center; font-size: 7.500px; color: #c8c8c8; white-space: nowrap; }
.clip-item .chev { margin-left: 4px; }
.clip-item .chev.gap { margin-left: 8px; }
.sm { width: 10px; height: 10px; margin-right: 2px; }
.clip-item .sm { margin-right: 3px; }
.stack { flex-direction: column; padding: 4px 0 0 5px; }
.line { height: 15px; display: flex; align-items: center; }
.line2 { margin-top: 6px; }
.field { height: 15px; background: #2c2c2c; border: 1px solid #4a4a4a; font-size: 7.200px; color: #bbb; display: flex; align-items: center; justify-content: space-between; padding: 0 3px 0 1px; }
.f-name { width: 76px; margin-right: 1px; }
.f-size { width: 32px; }
.f-gen { width: 91px; }
.grow-a { font-size: 10px; margin-left: 4px; color: #ccc; width: 16px; }
.grow-b { font-size: 8.500px; color: #ccc; margin-left: 1px; }
sup { font-size: 5px; line-height: 0; }
.fmt { font: 8px "Liberation Serif", serif; color: #ccc; width: 15px; text-align: center; }
b.fmt { font: 700 7.500px "Open Sans", sans-serif; width: 11px; margin-right: 4px; }
u.fmt { font: 8px "Open Sans", sans-serif; width: 14px; }
.fmt + .chev, u.fmt + .chev { margin-left: 4px; }
.m-l { margin: 0 5px 0 9px; }
.divider { width: 1px; height: 11px; background: #4a4a4a; margin: 0 6px 0 4px; }
.paint { display: flex; flex-direction: column; align-items: center; width: 11px; margin-right: 3px; }
.paint .sm { height: 8px; margin: 0; }
.bar { width: 11px; height: 2.500px; }
.yellow { background: #f2f000; }
.red { background: #e5102a; }
.color-a { font-size: 8.500px; line-height: 8px; color: #e04050; }
.m-s { margin-left: 8px; }
.al { width: 10px; height: 10px; margin-left: 5.500px; }
.g-align .stack { padding-left: 3px; }
.g-align .line:first-child .al { margin-top: -3px; }
.al-on { width: 15px; height: 15px; background: #5d5d5d; margin-left: 2px; padding-top: 2px; }
.al-on .al { margin: 0 0 0 2.500px !important; }
.m-o { margin: 0 2px 0 7px; }
.rule { width: 1px; height: 12px; margin: 0 8px 0 11px; }
.line2 .rule { margin: 0 4px; }
.al-text { font-size: 7.600px; color: #c4c4c4; white-space: nowrap; }
.m-i { margin-left: 10px; }
.num-line .sm { margin: 0 1px 0 1px; }
.pct { font-size: 10px; color: #ccc; margin-left: 11px; width: 17px; }
.comma { font-weight: 700; font-size: 9px; color: #ccc; width: 17px; }
.dec { font-size: 4.800px; line-height: 5px; color: #aaa; width: 16px; }
.bigs { padding-left: 0; }
.big { display: flex; flex-direction: column; align-items: center; text-align: center; font-size: 7.500px; line-height: 10.500px; color: #c4c4c4; white-space: nowrap; padding-top: 2px; }
.lg { width: 21px; height: 17px; margin-bottom: 3px; }
.w-cf { width: 48px; margin-left: 5px; }
.w-ft { width: 38px; }
.w-cs { width: 32px; }
.w-cell { width: 26.500px; }
.g-cells .bigs { padding-left: 6px; }
.edit-list { width: 64px; padding-left: 8px; margin-top: -1.500px; }
.sigma { font-size: 11px; width: 12px; flex: none; color: #ccc; }
.w-sort { width: 27px; margin-left: 3px; }
.w-find { width: 30px; }
.az { font: 7px "Open Sans", sans-serif; fill: #7db3e8; }
.w-addin { width: 39px; }
.g-addin .lg, .g-analyze .lg { height: 19px; width: 20px; margin-bottom: 1px; }
.collapse { position: absolute; right: 5px; bottom: 4px; width: 7px; height: 4px; }

/* QAT */
.qat { height: 21px; background: #2c2c2c; display: flex; align-items: center; padding-left: 5px; flex: none; }
.qat-auto { font-size: 6.500px; color: #c4c4c4; width: 32px; }
.toggle { width: 25px; height: 11px; border: 1px solid #ddd; border-radius: 6px; font-size: 5.500px; display: flex; align-items: center; justify-content: flex-end; padding-right: 3px; position: relative; margin-left: 0; }
.dot { position: absolute; left: 2.500px; top: 2px; width: 5px; height: 5px; border-radius: 50%; background: #eee; }
.qat-ic { width: 11px; height: 11px; margin-left: 8px; }
.qat .chev { margin-left: 3px; }
.q-dim { margin-left: 9px; }
.qat-more { width: 6px; height: 6px; margin-left: 10px; }

/* formula */
.formula { height: 28px; background: #1f1f1f; display: flex; align-items: center; padding: 0 3px; flex: none; }
.namebox { width: 66px; height: 16px; background: #2e2e2e; font-size: 8px; display: flex; align-items: center; justify-content: space-between; padding: 0 6px 0 4px; color: #d4d4d4; }
.vdots { width: 2px; height: 8px; margin: 0 8px 0 9px; border-left: 2px dotted #bbb; }
.fx-btns { width: 70px; height: 16px; background: #2a2a2a; display: flex; align-items: center; padding-left: 7px; gap: 15px; }
.fx-ic { width: 9px; height: 9px; }
.fx { font: italic 700 9px "Liberation Serif", serif; color: #ddd; margin-left: -2px; }
.fbar { flex: 1; height: 16px; margin-left: 3px; background: #2e2e2e; font-size: 8.050px; display: flex; align-items: center; justify-content: space-between; padding: 0 5px 0 7px; color: #d0d0d0; white-space: nowrap; }

/* sheet */
.sheet { height: 348px; display: flex; background: #222; position: relative; flex: none; }
.grid { width: 987px; display: flex; flex-direction: column; }
.row { display: grid; grid-template-columns: 13px 336px 42px 64px 64px 64px 404px; height: 8.840px; flex: none; }
.row.head { height: 9px; background: #252525; }
.rows { flex: 1; overflow: hidden; background: #fff; border-top: 1px solid #6ec9a5; }
.ch { font-size: 5.500px; color: #aaa; text-align: center; line-height: 9px; border-right: 1px solid #3a3a3a; }
.ch.sel { background: #6a6a6a; color: #ccc; }
.corner { background: #252525; }
.rh { background: #2a2a2a; color: #c8c8c8; font-size: 5.400px; line-height: 8.800px; text-align: center; border-bottom: 1px solid #444; overflow: hidden; }
.cell {
  font: 6.500px/8px Lato, "Open Sans", sans-serif; color: #333; white-space: nowrap; overflow: hidden;
  padding-left: 1px; border-bottom: 1px solid #e2e2e2; border-right: 1px solid #e6e6e6; background: #fff;
}
.cell:last-child { font-size: 6.250px; }
.cell.a { border-right: 1px solid #444; border-bottom-color: #fff; padding-left: 2px; }
.cell.green { background: #92dc50; color: #26521a; border-bottom-color: #92dc50; }
.cell.green.end { border-bottom-color: #4e7a30; }
.cell.plain { border-bottom: 1px solid #555; }
.cell.title { font: 700 5.400px/8px "Open Sans", sans-serif; color: #2c2c2c; border-bottom: 1px solid #555; }
.cell.b.box { border: 1px solid #666; border-top: 0; color: #555; padding-left: 0; }
.cell.b { border-right-color: #888; }

.vscroll { width: 13px; display: flex; flex-direction: column; background: #2a2a2a; }
.vbtn { height: 11px; background: #3a3a3a; margin: 1px; display: flex; align-items: center; justify-content: center; flex: none; }
.vtrack { flex: 1; position: relative; }
.vthumb { position: absolute; left: 0; right: 0; top: 93px; height: 17px; background: #5a5a5a; }
.tri { width: 0; height: 0; border-left: 3px solid transparent; border-right: 3px solid transparent; }
.tri.up { border-bottom: 3px solid #ddd; }
.tri.down { border-top: 3px solid #ddd; }
.cursor { position: absolute; left: 546px; top: 121px; width: 8px; height: 10px; }
.activate { position: absolute; left: 810px; top: 322px; pointer-events: none; }
.act-1 { font-size: 12.700px; color: rgba(150,150,150,.55); line-height: 17px; }
.act-2 { font-size: 8px; color: rgba(190,190,190,.4); line-height: 11px; margin-top: 2px; white-space: nowrap; }

/* sheet tabs */
.sheetbar { height: 14px; background: #1f1f1f; display: flex; align-items: center; flex: none; padding-left: 15px; }
.nav-tri { width: 0; height: 0; border-top: 2.500px solid transparent; border-bottom: 2.500px solid transparent; margin-right: 12px; flex: none; }
.nav-tri.left { border-right: 3px solid #888; }
.nav-tri.right { border-left: 3px solid #888; }
.nav-tri.lit { margin: 0; }
.nav-tri.left.lit { border-right-color: #ddd; }
.nav-tri.right.lit { border-left-color: #ddd; }
.sheet-tab { width: 40px; height: 14px; margin-left: 9px; background: #fff; color: #2a8058; font-size: 8.500px; font-weight: 600; text-align: center; line-height: 12px; }
.add-sheet { width: 11px; height: 11px; border: 1px solid #ccc; border-radius: 50%; margin-left: 18px; font-size: 9px; line-height: 8px; text-align: center; color: #ddd; }
.hdots { width: 2px; height: 8px; margin-left: 476px; border-left: 2px dotted #ccc; }
.hbtn { width: 10px; height: 10px; background: #3a3a3a; display: flex; align-items: center; justify-content: center; flex: none; }
.hbtn-first { margin-left: 7px; }
.hthumb { width: 237px; height: 10px; background: #2c2c2c; flex: none; }
.htrack { width: 123px; height: 10px; background: #080808; flex: none; }

/* status */
.status { height: 15px; background: #2a2a2a; display: flex; align-items: center; padding-left: 7px; font-size: 6.600px; color: #c4c4c4; flex: none; }
.ready { width: 32px; }
.acc { width: 11px; height: 11px; margin-right: 1px; }
.acc-text { width: 759px; white-space: nowrap; flex: none; }
.view { width: 26px; height: 15px; display: flex; align-items: center; justify-content: center; flex: none; }
.view-on { background: #4e4e4e; }
.view-ic { width: 10px; height: 9px; }
.zoom-minus { margin-left: 7px; width: 9px; font-size: 8px; }
.slider { width: 65px; height: 1px; background: #bbb; position: relative; flex: none; }
.knob { position: absolute; left: 22px; top: -3px; width: 3px; height: 7px; background: #ddd; }
.tick { position: absolute; left: 32px; top: -1.500px; width: 1px; height: 4px; background: #bbb; }
.zoom-plus { margin-left: 3px; width: 11px; font-size: 9px; }
.zoom-val { font-size: 6.500px; }

/* taskbar */
.taskbar { flex: 1; background: #1c1c1c; display: flex; align-items: center; }
.apps { display: flex; align-items: center; padding-left: 14.500px; height: 30px; width: 794px; flex: none; }
.app-ic { width: 28.700px; height: 30px; display: flex; align-items: center; justify-content: center; position: relative; flex: none; }
.app-ic svg { width: 16px; height: 16px; }
.dash::after { content: ""; position: absolute; bottom: 1px; left: 12px; width: 5px; height: 1.500px; background: #888; }
.badge { position: absolute; top: 4px; right: 4px; width: 9px; height: 9px; border-radius: 50%; font-size: 5.500px; line-height: 9px; text-align: center; color: #eee; }
.badge.gray { background: #6b4d4d; }
.badge.red { background: #c9302c; }
.excel { background: #2a2a2a; width: 26px; margin-left: 5px; border-radius: 2px; }
.excel::after { content: ""; position: absolute; bottom: 1px; left: 8px; width: 10px; height: 2px; background: #5cc4f2; }
.more { gap: 2px; margin-left: 1px; }
.more i { width: 2px; height: 2px; background: #ddd; border-radius: 50%; }
.up { font: 700 7px "Open Sans", sans-serif; fill: #fff; text-anchor: middle; }
.w { font: 700 7px "Open Sans", sans-serif; fill: #fff; text-anchor: middle; }
.o { font: 700 6px "Open Sans", sans-serif; fill: #fff; text-anchor: middle; }
.tray { flex: 1; display: flex; align-items: center; color: #d4d4d4; border-left: 1px solid #333; height: 30px; padding-left: 16px; }
.chevron-up { width: 8px; height: 5px; margin-right: 12px; }
.kb { width: 11px; height: 8px; margin-right: 10px; }
.lang { font-size: 7.200px; line-height: 10.500px; text-align: center; width: 18px; margin-right: 9px; }
.t-net { width: 11px; height: 11px; margin-right: 5px; }
.t-vol { width: 10px; height: 10px; margin-right: 6px; }
.t-bat { width: 11px; height: 10px; }
.clock { font-size: 7.600px; line-height: 11px; text-align: right; width: 50px; margin-left: 2px; flex: none; }
.t-bell { width: 9px; height: 10px; margin-left: 6px; }
```
